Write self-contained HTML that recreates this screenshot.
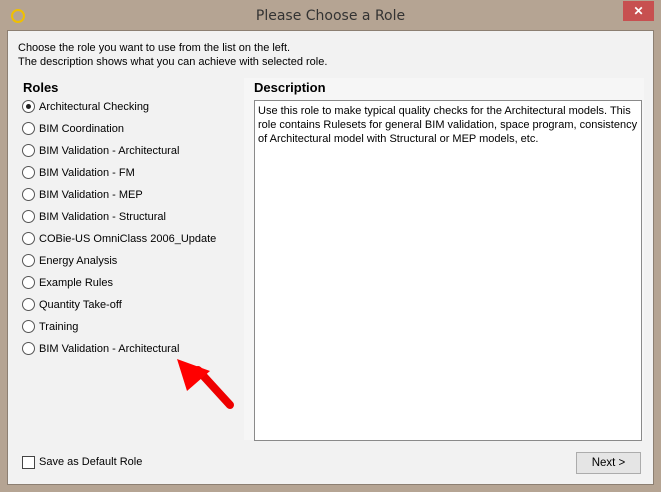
<!DOCTYPE html>
<html><head><meta charset="utf-8"><style>
*{margin:0;padding:0;box-sizing:border-box}
body{width:661px;height:492px;overflow:hidden;background:#b5a493;font-family:"Liberation Sans",Tahoma,sans-serif;font-size:11px;color:#000;position:relative}
.abs{position:absolute}
.title{left:0;top:0;width:661px;height:31px;text-align:center;font-size:15px;line-height:32px;color:#333;font-family:"DejaVu Sans",sans-serif;font-size:14px}
.close{left:623px;top:1px;width:31px;height:20px;background:#c75050;color:#fff;text-align:center;font-size:12px;line-height:20px;font-weight:bold}
.ring{left:11px;top:9px;width:14px;height:14px;border:2px solid #f0c000;border-radius:50%}
.client{left:7px;top:30px;width:647px;height:455px;background:#f2f2f2;border:1px solid #8c7f72}
.intro{left:18px;top:41px;line-height:14px;font-size:11px}
.rpanel{left:244px;top:78px;width:400px;height:362px;background:#f6f6f6}
.h{font-weight:bold;font-size:13px}
.role{position:absolute;left:22px;height:16px;line-height:16px;font-size:11px}
.role i{position:absolute;left:0;top:1px;width:13px;height:13px;border:1px solid #555;border-radius:50%;background:#fff}
.role span{position:absolute;left:17px;white-space:nowrap}
.desc{left:254px;top:100px;width:388px;height:341px;background:#fff;border:1px solid #8a8a8a;padding:3px 0 0 3px;font-size:11px;line-height:14px}
.cb{left:22px;top:456px;width:13px;height:13px;border:1px solid #444;background:#fff}
.btn{left:576px;top:452px;width:65px;height:22px;border:1px solid #acacac;background:#e5e5e5;text-align:center;line-height:20px;font-size:11.5px}
</style></head><body>
<div class="abs ring"></div>
<div class="abs title">Please Choose a Role</div>
<div class="abs close">✕</div>
<div class="abs client"></div>
<div class="abs intro">Choose the role you want to use from the list on the left.<br>The description shows what you can achieve with selected role.</div>
<div class="abs rpanel"></div>
<div class="abs h" style="left:23px;top:80px">Roles</div>
<div class="abs h" style="left:254px;top:80px">Description</div>
<div class="role" style="top:99px"><i><b style="position:absolute;left:3px;top:3px;width:5px;height:5px;border-radius:50%;background:#222"></b></i><span>Architectural Checking</span></div>
<div class="role" style="top:121px"><i></i><span>BIM Coordination</span></div>
<div class="role" style="top:143px"><i></i><span>BIM Validation - Architectural</span></div>
<div class="role" style="top:165px"><i></i><span>BIM Validation - FM</span></div>
<div class="role" style="top:187px"><i></i><span>BIM Validation - MEP</span></div>
<div class="role" style="top:209px"><i></i><span>BIM Validation - Structural</span></div>
<div class="role" style="top:231px"><i></i><span>COBie-US OmniClass 2006_Update</span></div>
<div class="role" style="top:253px"><i></i><span>Energy Analysis</span></div>
<div class="role" style="top:275px"><i></i><span>Example Rules</span></div>
<div class="role" style="top:297px"><i></i><span>Quantity Take-off</span></div>
<div class="role" style="top:319px"><i></i><span>Training</span></div>
<div class="role" style="top:341px"><i></i><span>BIM Validation - Architectural</span></div>
<div class="abs desc">Use this role to make typical quality checks for the Architectural models. This role contains Rulesets for general BIM validation, space program, consistency of Architectural model with Structural or MEP models, etc.</div>
<svg class="abs" style="left:170px;top:355px" width="75" height="65" viewBox="0 0 75 65">
<line x1="60" y1="50" x2="28" y2="15" stroke="#e00" stroke-width="8" stroke-linecap="round"/>
<polygon points="7,4 40,16 17,36" fill="#f00"/>
</svg>
<div class="abs cb"></div>
<div class="abs" style="left:39px;top:456px;font-size:11px">Save as Default Role</div>
<div class="abs btn">Next &gt;</div>
</body></html>
